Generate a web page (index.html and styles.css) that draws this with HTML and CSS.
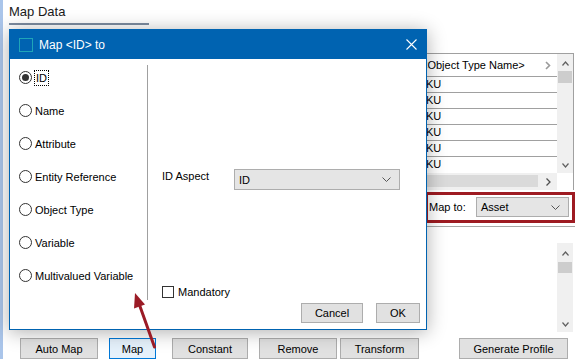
FILE: index.html
```html
<!DOCTYPE html>
<html>
<head>
<meta charset="utf-8">
<title>Map Data</title>
<link rel="stylesheet" href="styles.css">
</head>
<body>
<div class="page">
  <div class="title">Map Data</div>
  <div class="title-rule"></div>
  <div class="workspace">
    <div class="canvas"></div>
    <div class="side">
      <div class="list">
        <div class="list-main">
          <div class="list-head">
            <span>&lt;Object Type Name&gt;</span>
            <svg class="head-chev" width="6" height="9" viewBox="0 0 6 9"><polyline points="1,1 4.5,4.5 1,8" fill="none" stroke="#9a9a9a" stroke-width="1.6"/></svg>
          </div>
          <div class="row">KU</div>
          <div class="row">KU</div>
          <div class="row">KU</div>
          <div class="row">KU</div>
          <div class="row">KU</div>
          <div class="row">KU</div>
        </div>
        <div class="vscroll">
          <svg class="up" width="7" height="5" viewBox="0 0 7 5"><polyline points="0.5,4.5 3.5,1 6.5,4.5" fill="none" stroke="#606060" stroke-width="1.2"/></svg>
          <div class="thumb"></div>
          <svg class="down" width="7" height="5" viewBox="0 0 7 5"><polyline points="0.5,0.5 3.5,4 6.5,0.5" fill="none" stroke="#606060" stroke-width="1.2"/></svg>
        </div>
        <div class="hscroll">
          <div class="hthumb"></div>
          <svg class="right" width="5" height="8" viewBox="0 0 5 8"><polyline points="0.5,0.5 4,4 0.5,7.5" fill="none" stroke="#505050" stroke-width="1.3"/></svg>
        </div>
        <div class="corner"></div>
      </div>
      <div class="mapto">
        <span class="mapto-label">Map to:</span>
        <div class="select small">
          <span>Asset</span>
          <svg width="9" height="5" viewBox="0 0 9 5"><polyline points="0.5,0.5 4.5,4.5 8.5,0.5" fill="none" stroke="#555" stroke-width="1"/></svg>
        </div>
      </div>
      <div class="sep"></div>
      <div class="vscroll second">
        <svg class="up" width="7" height="5" viewBox="0 0 7 5"><polyline points="0.5,4.5 3.5,1 6.5,4.5" fill="none" stroke="#606060" stroke-width="1.2"/></svg>
        <div class="thumb"></div>
        <svg class="down" width="7" height="5" viewBox="0 0 7 5"><polyline points="0.5,0.5 3.5,4 6.5,0.5" fill="none" stroke="#606060" stroke-width="1.2"/></svg>
      </div>
    </div>
  </div>
  <div class="actions">
    <div class="btn b-auto">Auto Map</div>
    <div class="btn b-map active">Map</div>
    <div class="btn b-const">Constant</div>
    <div class="btn b-remove">Remove</div>
    <div class="btn b-trans">Transform</div>
    <div class="btn b-gen">Generate Profile</div>
  </div>
</div>

<div class="dialog">
  <div class="dlg-title">
    <div class="dlg-icon"></div>
    <span class="dlg-text">Map &lt;ID&gt; to</span>
    <svg class="dlg-close" width="11" height="11" viewBox="0 0 11 11"><path d="M0.5 0.5 L10.5 10.5 M10.5 0.5 L0.5 10.5" stroke="#fff" stroke-width="1.1"/></svg>
  </div>
  <div class="dlg-body">
    <div class="choices">
      <div class="choice"><span class="radio on"></span><span class="focus">ID</span></div>
      <div class="choice"><span class="radio"></span><span>Name</span></div>
      <div class="choice"><span class="radio"></span><span>Attribute</span></div>
      <div class="choice"><span class="radio"></span><span>Entity Reference</span></div>
      <div class="choice"><span class="radio"></span><span>Object Type</span></div>
      <div class="choice"><span class="radio"></span><span>Variable</span></div>
      <div class="choice"><span class="radio"></span><span>Multivalued Variable</span></div>
    </div>
    <div class="divider"></div>
    <div class="options">
      <div class="aspect">
        <span class="aspect-label">ID Aspect</span>
        <div class="select wide">
          <span>ID</span>
          <svg width="9" height="5" viewBox="0 0 9 5"><polyline points="0.5,0.5 4.5,4.5 8.5,0.5" fill="none" stroke="#555" stroke-width="1"/></svg>
        </div>
      </div>
      <div class="mandatory"><span class="check"></span><span>Mandatory</span></div>
      <div class="dlg-buttons">
        <div class="btn b-cancel">Cancel</div>
        <div class="btn b-ok">OK</div>
      </div>
    </div>
  </div>
</div>

<svg class="arrow" width="575" height="359" viewBox="0 0 575 359">
  <line x1="139.5" y1="305" x2="154.5" y2="347" stroke="#9b1b26" stroke-width="3" stroke-linecap="round"/>
  <polygon points="135,293 145,304.5 134,308.5" fill="#9b1b26"/>
</svg>
</body>
</html>
```

FILE: styles.css
```css
* {
  box-sizing: border-box;
  margin: 0;
  padding: 0;
}

html, body {
  width: 575px;
  height: 359px;
  overflow: hidden;
  background: #fff;
}

body {
  position: relative;
  font-family: "Liberation Sans", Arial, sans-serif;
  font-size: 11px;
  color: #000;
}

.page {
  height: 359px;
  border-left: 3px solid #aac5ea;
  display: flex;
  flex-direction: column;
}

.title {
  font-size: 13px;
  line-height: 18px;
  padding: 3px 0 0 6px;
  color: #1a1a1a;
}

.title-rule {
  margin: 2px 0 0 6px;
  width: 140px;
  height: 2px;
  background: #7d8ca0;
}

.workspace {
  flex: 1;
  display: flex;
  min-height: 0;
}

.canvas {
  flex: 1;
}

.side {
  width: 156px;
  padding-top: 28px;
  display: flex;
  flex-direction: column;
}

.list {
  margin-right: 1px;
  border-top: 1px solid #a0a0a0;
  border-right: 1px solid #a0a0a0;
  display: grid;
  grid-template-columns: 1fr 16px;
}

.list-head {
  height: 23px;
  border-bottom: 1px solid #a0a0a0;
  display: flex;
  align-items: center;
  justify-content: space-between;
  padding: 0 6px 0 2px;
}

.row {
  height: 16px;
  line-height: 15px;
  border-bottom: 1px solid #a0a0a0;
  padding-left: 7px;
}

.row:last-child {
  border-bottom: 0;
}

.vscroll {
  width: 16px;
  background: #f0f0f0;
  display: flex;
  flex-direction: column;
  align-items: center;
}

.vscroll .up {
  margin-top: 7px;
}

.vscroll .thumb {
  width: 14px;
  height: 12px;
  margin-top: 5px;
  background: #cdcdcd;
}

.vscroll .down {
  margin-top: auto;
  margin-bottom: 5px;
}

.hscroll {
  height: 17px;
  background: #f0f0f0;
  display: flex;
  align-items: flex-start;
}

.hthumb {
  width: 119px;
  height: 12px;
  margin-top: 2px;
  background: #dadada;
}

.hscroll .right {
  margin: 5px 0 0 8px;
}

.corner {
  background: #fff;
}

.mapto {
  margin: 2px 0 0 6px;
  height: 31px;
  border: 3px solid #9e1b22;
  display: flex;
  align-items: center;
  padding: 0 3px 1px 1px;
}

.mapto-label {
  width: 47px;
}

.select {
  height: 20px;
  background: #e5e5e5;
  border: 1px solid #adadad;
  display: flex;
  align-items: center;
  justify-content: space-between;
  padding: 0 8px 0 4px;
}

.select.small {
  width: 93px;
}

.select.wide {
  width: 166px;
  height: 21px;
}

.sep {
  margin: 3px 0 0 8px;
  height: 1px;
  background: #a8a8a8;
}

.vscroll.second {
  margin: 16px 2px 0 auto;
  height: 89px;
}

.vscroll.second .up {
  margin-top: 8px;
}

.vscroll.second .thumb {
  height: 11px;
  margin-top: 6px;
}

.actions {
  height: 21px;
  display: flex;
}

.btn {
  height: 20px;
  background: #e1e1e1;
  border: 1px solid #adadad;
  display: flex;
  align-items: center;
  justify-content: center;
}

.actions .btn {
  height: 21px;
}

.btn.active {
  background: #e5f1fb;
  border-color: #0078d7;
}

.b-auto { width: 78px; margin-left: 17px; }
.b-map { width: 47px; margin-left: 11px; }
.b-const { width: 76px; margin-left: 16px; }
.b-remove { width: 78px; margin-left: 11px; }
.b-trans { width: 79px; margin-left: 3px; }
.b-gen { width: 109px; margin-left: 40px; }

/* dialog */
.dialog {
  position: absolute;
  left: 9px;
  top: 29px;
  width: 418px;
  height: 301px;
  border: 1px solid #0063b1;
  background: #fff;
  box-shadow: 0 2px 18px rgba(0, 0, 0, 0.32);
  display: flex;
  flex-direction: column;
}

.dlg-title {
  height: 29px;
  background: #0063b1;
  color: #fff;
  display: flex;
  align-items: center;
  padding: 0 9px;
  font-size: 12px;
}

.dlg-icon {
  width: 14px;
  height: 14px;
  border: 1.5px solid #1fa5b8;
  margin-right: 6px;
}

.dlg-text {
  flex: 1;
}

.dlg-body {
  flex: 1;
  display: flex;
}

.choices {
  width: 137px;
  padding: 2px 0 0 9px;
}

.choice {
  height: 33px;
  display: flex;
  align-items: center;
}

.radio {
  width: 13px;
  height: 13px;
  border: 1px solid #333;
  border-radius: 50%;
  margin-right: 3px;
  display: flex;
  align-items: center;
  justify-content: center;
}

.radio.on::after {
  content: "";
  width: 7px;
  height: 7px;
  border-radius: 50%;
  background: #333;
}

.focus {
  outline: 1px dotted #000;
  outline-offset: 0;
  padding: 0 1px;
  line-height: 14px;
}

.divider {
  width: 1px;
  margin-top: 6px;
  height: 235px;
  background: #a0a0a0;
}

.options {
  flex: 1;
  display: flex;
  flex-direction: column;
  padding: 110px 6px 6px 14px;
}

.aspect {
  display: flex;
  align-items: flex-start;
}

.aspect-label {
  width: 72px;
  line-height: 13px;
  padding-top: 1px;
}

.mandatory {
  margin-top: auto;
  display: flex;
  align-items: center;
  height: 12px;
}

.check {
  width: 12px;
  height: 12px;
  border: 1px solid #333;
  margin-right: 4px;
}

.dlg-buttons {
  display: flex;
  justify-content: flex-end;
  gap: 13px;
  margin-top: 5px;
}

.b-cancel { width: 62px; }
.b-ok { width: 44px; }

.arrow {
  position: absolute;
  left: 0;
  top: 0;
  pointer-events: none;
}
```
